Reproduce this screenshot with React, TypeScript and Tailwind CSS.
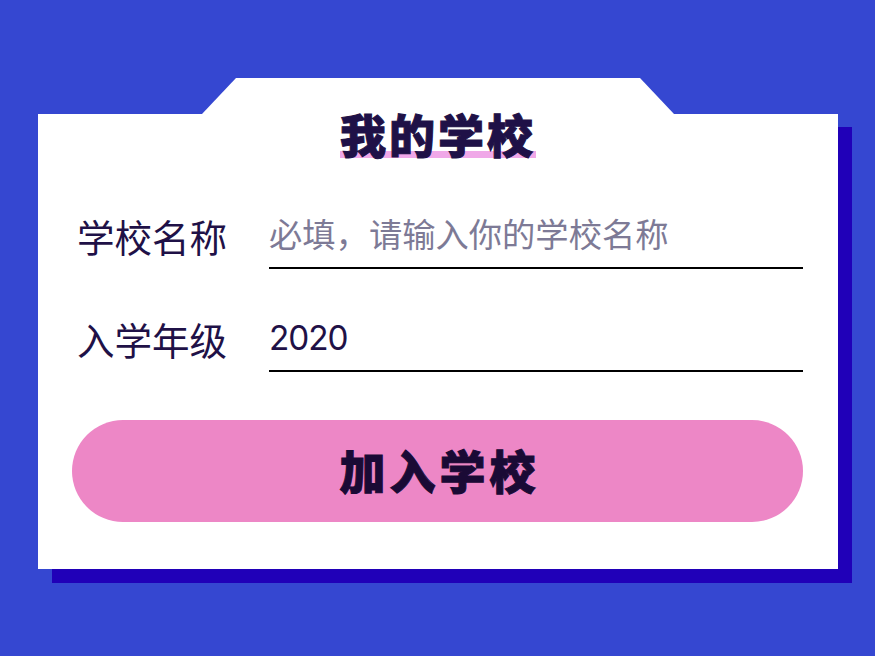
const cjk = "font-['Inter','Noto_Sans_CJK_SC',sans-serif]"

function Field({ label, placeholder, value }: { label: string; placeholder?: string; value?: string }) {
  return (
    <div className="flex items-start">
      <label className="w-[231px] pl-[39px] pt-[10px] text-[37.5px] leading-[50px] text-[#1f1147] whitespace-nowrap">{label}</label>
      <div className="w-[534px] h-[65px] border-b-2 border-black">
        <input
          readOnly
          defaultValue={value}
          placeholder={placeholder}
          className="w-full h-[50px] mt-[6px] text-[33.3px] tracking-[-1px] placeholder:tracking-normal leading-[50px] text-[#1f1147] placeholder:text-[#7d7a96] outline-none bg-transparent"
        />
      </div>
    </div>
  )
}

export default function App() {
  return (
    <div className={`min-h-screen bg-[#3547d1] pt-[78px] pl-[38px] ${cjk}`}>
      <div className="relative w-[800px]">
        <div className="absolute left-[14px] top-[49px] w-[800px] h-[456px] bg-[#2000b8]" />
        <div className="relative">
          <div className="ml-[164px] w-[472px] h-[36px] bg-white [clip-path:polygon(34px_0,438px_0,100%_100%,0_100%)]" />
          <div className="bg-white h-[455px] flex flex-col">
            <div className="flex justify-center h-[46px]">
              <h1 className="relative h-[44px] text-[46px] leading-[44px] tracking-[3px] font-black text-[#1f1147] [-webkit-text-stroke:1px_#1f1147]">
                <span className="absolute left-0 right-0 bottom-0 h-[7px] bg-[#f0a8e8]" />
                <span className="relative">我的学校</span>
              </h1>
            </div>
            <div className="mt-[44px] flex flex-col gap-[38px]">
              <Field label="学校名称" placeholder="必填，请输入你的学校名称" />
              <Field label="入学年级" value="2020" />
            </div>
            <button className="mt-[48px] ml-[34px] w-[731px] h-[102px] pl-[4px] pt-[2px] rounded-full bg-[#ed87c6] text-[46px] tracking-[4px] font-black text-[#1a0a35] [-webkit-text-stroke:1px_#1a0a35]">
              加入学校
            </button>
          </div>
        </div>
      </div>
    </div>
  )
}
